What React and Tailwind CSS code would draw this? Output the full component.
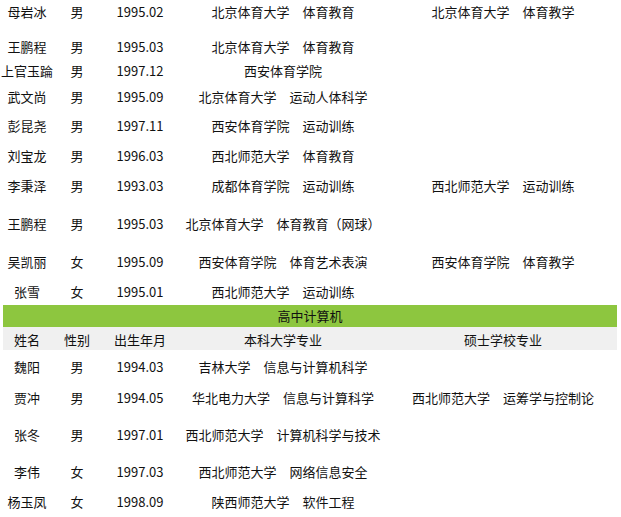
const SP = '\u3000';

const sports = [
  { h: 35, name: '母岩冰', sex: '男', born: '1995.02', ben: `北京体育大学${SP}体育教育`, shuo: `北京体育大学${SP}体育教学` },
  { h: 24, name: '王鹏程', sex: '男', born: '1995.03', ben: `北京体育大学${SP}体育教育` },
  { h: 26, name: '上官玉踚', sex: '男', born: '1997.12', ben: '西安体育学院' },
  { h: 29, name: '武文尚', sex: '男', born: '1995.09', ben: `北京体育大学${SP}运动人体科学` },
  { h: 30, name: '彭昆尧', sex: '男', born: '1997.11', ben: `西安体育学院${SP}运动训练` },
  { h: 30, name: '刘宝龙', sex: '男', born: '1996.03', ben: `西北师范大学${SP}体育教育` },
  { h: 38, name: '李秉泽', sex: '男', born: '1993.03', ben: `成都体育学院${SP}运动训练`, shuo: `西北师范大学${SP}运动训练` },
  { h: 38, name: '王鹏程', sex: '男', born: '1995.03', ben: `北京体育大学${SP}体育教育（网球）` },
  { h: 30, name: '吴凯丽', sex: '女', born: '1995.09', ben: `西安体育学院${SP}体育艺术表演`, shuo: `西安体育学院${SP}体育教学` },
  { h: 21, name: '张雪', sex: '女', born: '1995.01', ben: `西北师范大学${SP}运动训练` },
];

const computing = [
  { h: 31, name: '魏阳', sex: '男', born: '1994.03', ben: `吉林大学${SP}信息与计算机科学` },
  { h: 37, name: '贾冲', sex: '男', born: '1994.05', ben: `华北电力大学${SP}信息与计算科学`, shuo: `西北师范大学${SP}运筹学与控制论` },
  { h: 37, name: '张冬', sex: '男', born: '1997.01', ben: `西北师范大学${SP}计算机科学与技术` },
  { h: 30, name: '李伟', sex: '女', born: '1997.03', ben: `西北师范大学${SP}网络信息安全` },
  { h: 16, name: '杨玉凤', sex: '女', born: '1998.09', ben: `陕西师范大学${SP}软件工程` },
];

function Cell({ w, children }) {
  return (
    <div className={`flex shrink-0 justify-center whitespace-nowrap ${w}`}>
      {children}
    </div>
  );
}

function Row({ r }) {
  return (
    <div className="flex items-start" style={{ height: r.h }}>
      <Cell w="w-[48px]">{r.name}</Cell>
      <Cell w="w-[52px]">{r.sex}</Cell>
      <Cell w="w-[74px]">{r.born}</Cell>
      <Cell w="w-[212px]">{r.ben}</Cell>
      <Cell w="w-[228px]">{r.shuo || ''}</Cell>
    </div>
  );
}

export default function App() {
  return (
    <div
      className="w-[621px] h-[517px] overflow-hidden bg-white text-[13px] leading-[16px] text-[#111]"
      style={{ fontFamily: '"Noto Sans CJK SC", "Noto Sans", sans-serif' }}
    >
      <div className="ml-[3px] w-[614px] pt-[4px]">
        {sports.map((r, i) => (
          <Row key={i} r={r} />
        ))}

        {/* 分组标题 */}
        <div className="flex h-[22px] items-center justify-center bg-[#8dc63f]">
          高中计算机
        </div>

        {/* 表头 */}
        <div className="flex h-[23px] items-start bg-[#f0f0f0] pt-[5px]">
          <Cell w="w-[48px]">姓名</Cell>
          <Cell w="w-[52px]">性别</Cell>
          <Cell w="w-[74px]">出生年月</Cell>
          <Cell w="w-[212px]">本科大学专业</Cell>
          <Cell w="w-[228px]">硕士学校专业</Cell>
        </div>

        <div className="mt-[9px]">
          {computing.map((r, i) => (
            <Row key={i} r={r} />
          ))}
        </div>
      </div>
    </div>
  );
}
